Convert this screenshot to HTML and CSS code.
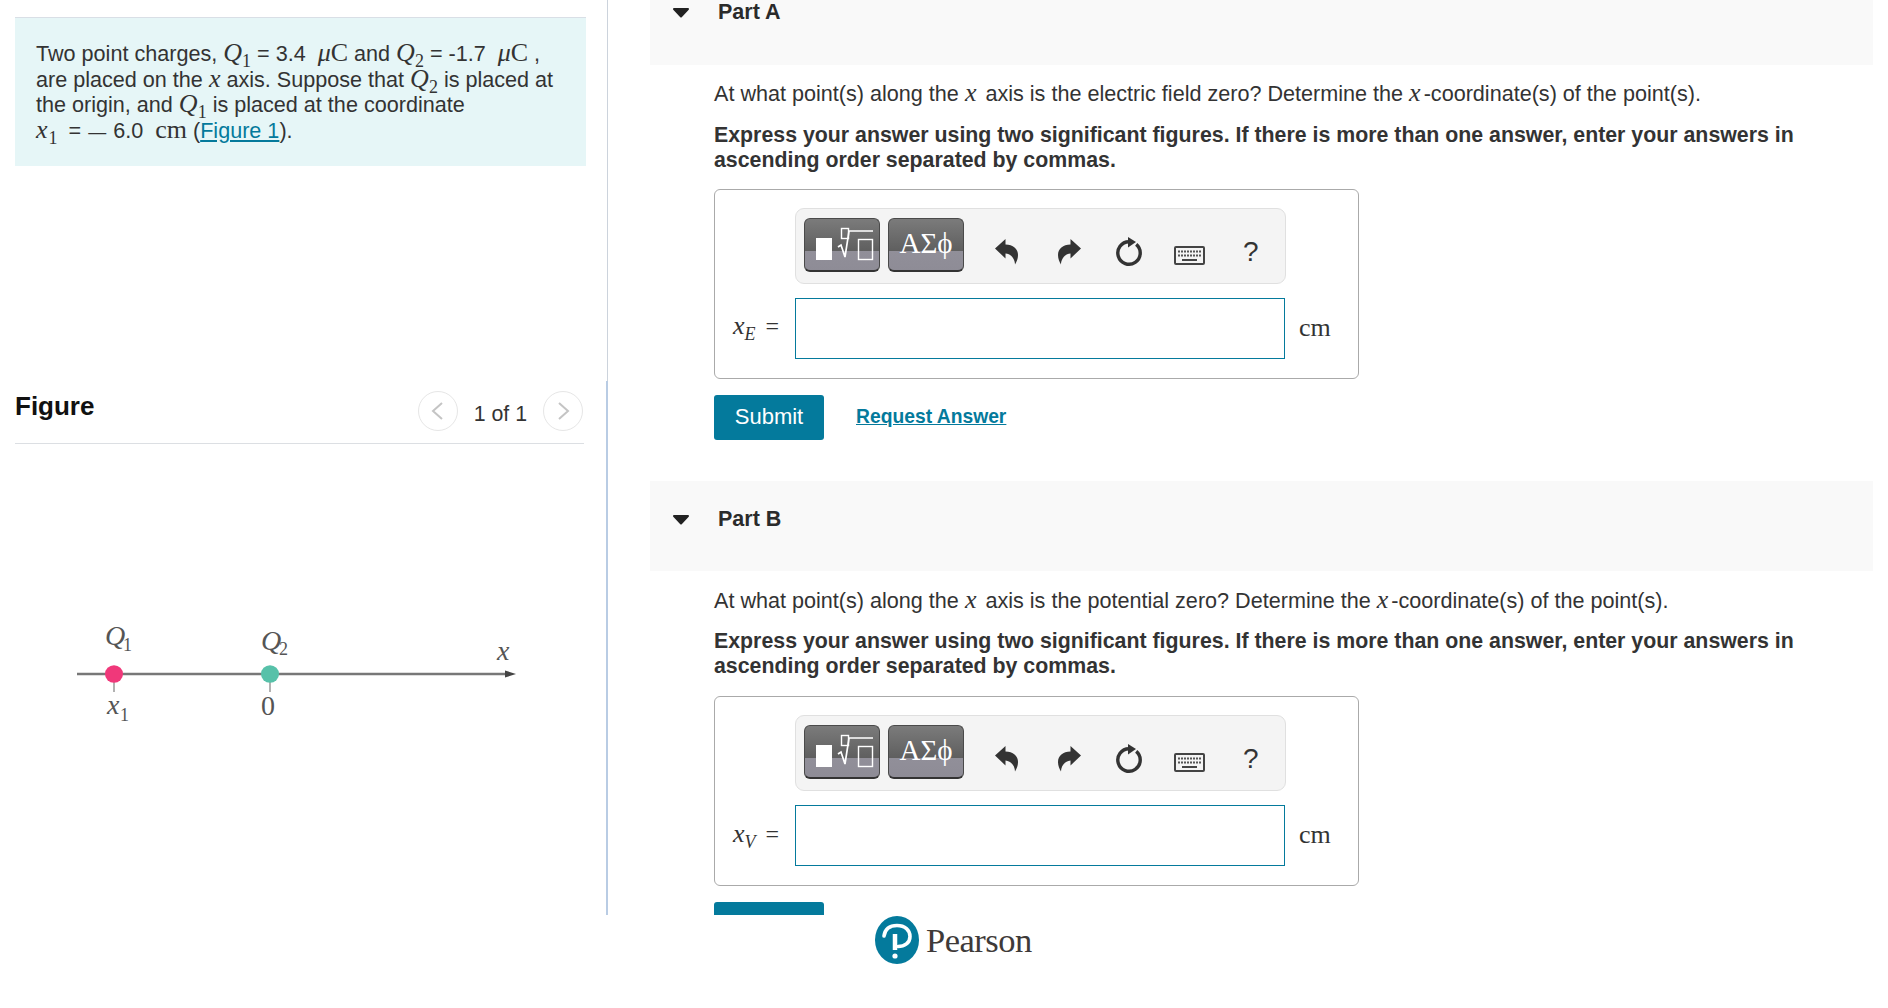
FILE: index.html
```html
<!DOCTYPE html>
<html>
<head>
<title>Two point charges</title>
<link rel="stylesheet" href="styles.css">
</head>
<body>
<div class="page">
  <div class="left">
    <div class="left-top">
      <div class="intro">
        Two point charges, <i class="m">Q<sub>1</sub></i> = 3.4 &nbsp;<span class="m"><i>μ</i>C</span> and <i class="m">Q<sub>2</sub></i> = -1.7 &nbsp;<span class="m"><i>μ</i>C</span> ,<br>
        are placed on the <i class="m">x</i> axis. Suppose that <i class="m">Q<sub>2</sub></i> is placed at<br>
        the origin, and <i class="m">Q<sub>1</sub></i> is placed at the coordinate<br>
        <i class="m coord">x<sub>1</sub></i> = <span class="dash">—</span> 6.0 &nbsp;<span class="m">cm</span> (<a href="#">Figure 1</a>).
      </div>
    </div>
    <div class="left-bottom">
      <div class="fig-head">
        <div class="fig-title">Figure</div>
        <div class="pager">
          <span class="circle"><svg width="13" height="20" viewBox="0 0 13 20"><path d="M11 2 L2 10 L11 18" fill="none" stroke="#c4c4c4" stroke-width="2"/></svg></span>
          <span class="pager-text">1 of 1</span>
          <span class="circle"><svg width="13" height="20" viewBox="0 0 13 20"><path d="M2 2 L11 10 L2 18" fill="none" stroke="#c4c4c4" stroke-width="2"/></svg></span>
        </div>
      </div>
      <svg class="diagram" width="592" height="150" viewBox="0 0 592 150">
        <line x1="77" y1="72" x2="508" y2="72" stroke="#777" stroke-width="2.600"/>
        <path d="M516 72 L505 68.5 L505 75.5 Z" fill="#444"/>
        <line x1="114" y1="72" x2="114" y2="90" stroke="#999" stroke-width="1.500"/>
        <line x1="270" y1="72" x2="270" y2="90" stroke="#999" stroke-width="1.500"/>
        <ellipse cx="114" cy="72" rx="9" ry="8.700" fill="#f0387a"/>
        <ellipse cx="270" cy="72" rx="9" ry="8.700" fill="#57c1a9"/>
        <g class="fig-label">
          <text x="105" y="43" font-size="28" font-style="italic">Q</text>
          <text x="123" y="49" font-size="18">1</text>
          <text x="261" y="48" font-size="28" font-style="italic">Q</text>
          <text x="279" y="53" font-size="18">2</text>
          <text x="497" y="58" font-size="28" font-style="italic">x</text>
          <text x="107" y="112" font-size="28" font-style="italic">x</text>
          <text x="120" y="119" font-size="18">1</text>
          <text x="261" y="113" font-size="28">0</text>
        </g>
      </svg>
    </div>
  </div>

  <div class="right">
    <div class="scroller">
      <div class="part">
        <div class="part-head"><svg class="caret" width="18" height="11" viewBox="0 0 18 11"><path d="M2 2 H16 L9 9.500 Z" fill="#222" stroke="#222" stroke-width="2" stroke-linejoin="round"/></svg>Part A</div>
        <div class="part-body">
          <p class="question">At what point(s) along the <i class="m">x</i> axis is the electric field zero? Determine the <i class="m">x</i>-coordinate(s) of the point(s).</p>
          <p class="express">Express your answer using two significant figures. If there is more than one answer, enter your answers in ascending order separated by commas.</p>
          <div class="answer">
            <div class="toolbar">
              <span class="tool-btn">
                <svg width="76" height="54" viewBox="0 0 76 54"><rect x="12" y="20" width="16" height="22" fill="#fff"/><rect x="37.500" y="10.500" width="7" height="10" fill="none" stroke="#fff" stroke-width="1.400"/><path d="M34 29 L37 27 L41 39 L45 13 L69 13" fill="none" stroke="#fff" stroke-width="1.700"/><rect x="54.500" y="21.500" width="14" height="20" fill="none" stroke="#fff" stroke-width="1.400"/></svg>
              </span>
              <span class="tool-btn tool-text">ΑΣϕ</span>
              <svg class="ico ico-undo" width="24" height="26" viewBox="0 0 24 26"><path d="M0 9.500 L10.500 0 V5.500 C18 5.500 23 10 23 16 C23 20 21.500 23 20 25.500 C20 21 17 15 10.500 14.500 V19.500 Z" fill="#333"/></svg>
              <svg class="ico ico-redo" width="24" height="26" viewBox="0 0 24 26"><path d="M23 9.500 L12.500 0 V5.500 C5 5.500 0 10 0 16 C0 20 1.500 23 3 25.500 C3 21 6 15 12.500 14.500 V19.500 Z" fill="#333"/></svg>
              <svg class="ico ico-reset" width="28" height="30" viewBox="0 0 28 30"><path d="M13 4.800 A11.200 11.200 0 1 0 20.200 7.400" fill="none" stroke="#333" stroke-width="3.400"/><path d="M12 0 L20 5 L12 10.500 Z" fill="#333"/></svg>
              <svg class="ico ico-keys" width="31" height="19" viewBox="0 0 31 19"><rect x="1" y="1" width="29" height="17" rx="1" fill="#f4f4f4" stroke="#444" stroke-width="2"/><path d="M4 5.500 H27 M4 9.500 H27" stroke="#555" stroke-width="2" stroke-dasharray="2 1"/><path d="M8 14 H23" stroke="#444" stroke-width="2"/></svg>
              <span class="ico-help">?</span>
            </div>
            <div class="answer-row">
              <span class="lhs"><i>x<sub>E</sub></i><span class="eq">=</span></span>
              <div class="field"></div>
              <span class="unit">cm</span>
            </div>
          </div>
          <div class="actions">
            <span class="submit">Submit</span>
            <a class="request" href="#">Request Answer</a>
          </div>
        </div>
      </div>

      <div class="part">
        <div class="part-head"><svg class="caret" width="18" height="11" viewBox="0 0 18 11"><path d="M2 2 H16 L9 9.500 Z" fill="#222" stroke="#222" stroke-width="2" stroke-linejoin="round"/></svg>Part B</div>
        <div class="part-body">
          <p class="question">At what point(s) along the <i class="m">x</i> axis is the potential zero? Determine the <i class="m">x</i>-coordinate(s) of the point(s).</p>
          <p class="express">Express your answer using two significant figures. If there is more than one answer, enter your answers in ascending order separated by commas.</p>
          <div class="answer">
            <div class="toolbar">
              <span class="tool-btn">
                <svg width="76" height="54" viewBox="0 0 76 54"><rect x="12" y="20" width="16" height="22" fill="#fff"/><rect x="37.500" y="10.500" width="7" height="10" fill="none" stroke="#fff" stroke-width="1.400"/><path d="M34 29 L37 27 L41 39 L45 13 L69 13" fill="none" stroke="#fff" stroke-width="1.700"/><rect x="54.500" y="21.500" width="14" height="20" fill="none" stroke="#fff" stroke-width="1.400"/></svg>
              </span>
              <span class="tool-btn tool-text">ΑΣϕ</span>
              <svg class="ico ico-undo" width="24" height="26" viewBox="0 0 24 26"><path d="M0 9.500 L10.500 0 V5.500 C18 5.500 23 10 23 16 C23 20 21.500 23 20 25.500 C20 21 17 15 10.500 14.500 V19.500 Z" fill="#333"/></svg>
              <svg class="ico ico-redo" width="24" height="26" viewBox="0 0 24 26"><path d="M23 9.500 L12.500 0 V5.500 C5 5.500 0 10 0 16 C0 20 1.500 23 3 25.500 C3 21 6 15 12.500 14.500 V19.500 Z" fill="#333"/></svg>
              <svg class="ico ico-reset" width="28" height="30" viewBox="0 0 28 30"><path d="M13 4.800 A11.200 11.200 0 1 0 20.200 7.400" fill="none" stroke="#333" stroke-width="3.400"/><path d="M12 0 L20 5 L12 10.500 Z" fill="#333"/></svg>
              <svg class="ico ico-keys" width="31" height="19" viewBox="0 0 31 19"><rect x="1" y="1" width="29" height="17" rx="1" fill="#f4f4f4" stroke="#444" stroke-width="2"/><path d="M4 5.500 H27 M4 9.500 H27" stroke="#555" stroke-width="2" stroke-dasharray="2 1"/><path d="M8 14 H23" stroke="#444" stroke-width="2"/></svg>
              <span class="ico-help">?</span>
            </div>
            <div class="answer-row">
              <span class="lhs"><i>x<sub>V</sub></i><span class="eq">=</span></span>
              <div class="field"></div>
              <span class="unit">cm</span>
            </div>
          </div>
          <div class="actions">
            <span class="submit">Submit</span>
            <a class="request" href="#">Request Answer</a>
          </div>
        </div>
      </div>
    </div>
  </div>
</div>
<div class="footer">
  <svg width="44" height="48" viewBox="0 0 44 48">
    <ellipse cx="22" cy="24" rx="22" ry="24" fill="#047a9c"/>
    <path d="M9 20 C10 13 15 9.500 22 9.500 C30 9.500 35 14 35 20.500 C35 27 29.500 30.500 23 30.500" fill="none" stroke="#fff" stroke-width="3.600" stroke-linecap="round"/>
    <path d="M20 18 V34" stroke="#fff" stroke-width="4.500"/>
    <circle cx="20" cy="40" r="2.600" fill="#fff"/>
  </svg>
  <span class="brand">Pearson</span>
</div>
</body>
</html>
```

FILE: styles.css
```css
html, body {
  margin: 0;
  padding: 0;
  background: #fff;
  height: 1008px;
  overflow: hidden;
  font-family: "Liberation Sans", Arial, sans-serif;
  color: #333;
}

.page {
  display: flex;
  height: 915px;
  overflow: hidden;
}

.left {
  width: 608px;
  flex: none;
  display: flex;
  flex-direction: column;
}

.left-top {
  height: 381px;
  padding: 17px 21px 0 15px;
  box-sizing: border-box;
  border-right: 1px solid #ccd3dc;
}

.left-bottom {
  flex: 1;
  padding: 0 22px 0 15px;
  border-right: 2px solid #b9cce4;
}

.intro {
  background: #e6f6f7;
  border-top: 1px solid #d9dfe6;
  height: 149px;
  box-sizing: border-box;
  padding: 23px 21px 0;
  font-size: 21.600px;
  line-height: 25.500px;
  white-space: nowrap;
}

.intro a {
  color: #047a9c;
}

.m {
  font-family: "Liberation Serif", "Times New Roman", serif;
  font-size: 26px;
  line-height: 0;
}

.m sub {
  font-size: 18px;
  font-style: normal;
  line-height: 0;
}

.coord {
  margin-right: 4px;
  letter-spacing: 1px;
}

.dash {
  font-size: 18px;
  margin: 0 1px;
}

.fig-head {
  display: flex;
  justify-content: space-between;
  height: 52px;
  border-bottom: 1px solid #dcdfe3;
  padding-top: 10px;
}

.fig-title {
  font-size: 26px;
  font-weight: bold;
  color: #111;
  line-height: 30px;
}

.pager {
  display: flex;
  gap: 16px;
  font-size: 21.330px;
  align-items: flex-start;
  margin-right: 1px;
}

.pager-text {
  margin-top: 11px;
  line-height: 24px;
}

.circle {
  width: 40px;
  height: 40px;
  box-sizing: border-box;
  border: 1px solid #e6e6e6;
  border-radius: 50%;
  display: flex;
  align-items: center;
  justify-content: center;
}

.diagram {
  display: block;
  margin: 158px 0 0 -15px;
}

.fig-label text {
  font-family: "Liberation Serif", serif;
  fill: #555;
}

.right {
  flex: 1;
  overflow: hidden;
  padding: 0 15px 0 42px;
}

.scroller {
  margin-top: -25.300px;
}

.part-head {
  background: #f9f9f9;
  height: 90.300px;
  box-sizing: border-box;
  padding: 25.300px 0 0 68px;
  font-size: 21.500px;
  font-weight: bold;
  line-height: 24px;
  color: #2b2b2b;
  display: flex;
}

.part + .part .part-head {
  padding-top: 26.300px;
}

.caret {
  margin: 7px 28px 0 -46px;
  flex: none;
}

.part-body {
  padding: 15.500px 60px 41.500px 64px;
}

.part + .part .part-body {
  padding-top: 16.500px;
}

.question {
  margin: 0;
  font-size: 21.600px;
  line-height: 25px;
}

.question .m {
  font-size: 26px;
  margin-right: 3px;
}

.express {
  margin: 17px 0 16px;
  font-size: 21.330px;
  line-height: 25px;
  font-weight: bold;
}

.part + .part .express {
  margin: 16px 0 17px;
}

.answer {
  width: 645px;
  height: 190px;
  box-sizing: border-box;
  border: 1.500px solid #aaa;
  border-radius: 6px;
  padding: 18px 42px 0 80px;
}

.toolbar {
  width: 491px;
  height: 76px;
  box-sizing: border-box;
  background: #f4f4f4;
  border: 1px solid #e0e0e0;
  border-radius: 9px;
  display: flex;
  align-items: flex-start;
  padding: 9px 0 0 8px;
  position: relative;
}

.tool-btn {
  width: 76px;
  height: 54px;
  box-sizing: border-box;
  margin-right: 8px;
  border-radius: 6px;
  border: 1px solid #4a4a4a;
  border-bottom: 2px solid #333;
  background: linear-gradient(#7b7b7b 0%, #5f5f5f 62%, #918f99 63%, #8e8c96 100%);
  display: flex;
  overflow: hidden;
}

.tool-btn svg {
  margin: -1px;
  flex: none;
}

.tool-text {
  color: #fff;
  font-family: "Liberation Serif", serif;
  font-size: 29px;
  line-height: 48px;
  justify-content: center;
}

/* toolbar glyphs sit at uneven spots over the grey bar */
.ico {
  position: absolute;
}

.ico-undo { left: 199px; top: 30px; }
.ico-redo { left: 262px; top: 30px; }
.ico-reset { left: 320px; top: 28px; }
.ico-keys { left: 378px; top: 37px; }

.ico-help {
  position: absolute;
  left: 447px;
  top: 28px;
  font-size: 28px;
  line-height: 30px;
}

.answer-row {
  display: flex;
  align-items: center;
  margin: 14px 0 0 -62px;
  height: 61px;
}

.lhs {
  width: 62px;
  flex: none;
  margin-top: 5px;
  font-family: "Liberation Serif", serif;
  font-size: 26px;
  line-height: 0;
  white-space: nowrap;
}

.lhs sub {
  font-size: 18px;
  line-height: 0;
}

.eq {
  margin-left: 10px;
  font-size: 24px;
}

.field {
  width: 490px;
  height: 61px;
  box-sizing: border-box;
  flex: none;
  border: 1.500px solid #047a9c;
  background: #fff;
}

.unit {
  margin-left: 14px;
  font-family: "Liberation Serif", serif;
  font-size: 26px;
}

.actions {
  display: flex;
  align-items: center;
  margin-top: 16px;
  gap: 32px;
}

.submit {
  width: 110px;
  height: 45px;
  background: #047a9c;
  color: #fff;
  border-radius: 3px;
  font-size: 22px;
  line-height: 43px;
  text-align: center;
}

.request {
  color: #047a9c;
  font-size: 19.300px;
  font-weight: bold;
}

.footer {
  display: flex;
  align-items: center;
  gap: 7px;
  padding: 1px 0 0 875px;
}

.brand {
  font-family: "Liberation Serif", serif;
  font-size: 34.500px;
  color: #3e3a39;
  letter-spacing: -0.500px;
}
```
